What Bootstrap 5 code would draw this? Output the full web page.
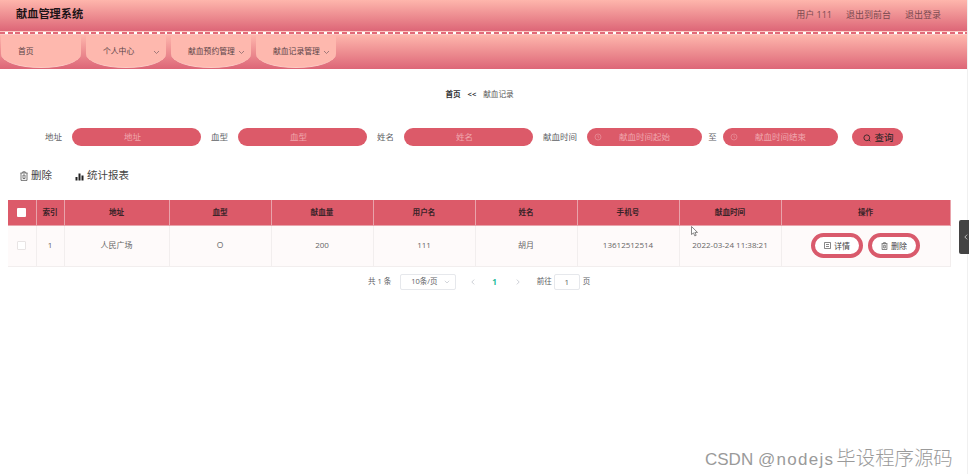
<!DOCTYPE html>
<html lang="zh-CN">
<head>
<meta charset="utf-8">
<title>献血管理系统</title>
<link href="https://cdn.jsdelivr.net/npm/bootstrap@5.3.0/dist/css/bootstrap.min.css" rel="stylesheet">
<style>
html,body{height:100%;overflow:hidden}
body{font-family:"Open Sans","Noto Sans CJK SC",sans-serif;background:#fff;color:#666;width:969px;height:474px;position:relative;font-size:8px}
.page-shell{width:968px;height:474px;border-right:1px solid #f0f0f0}
.top-head{height:31px;background:linear-gradient(180deg,#feb6ac,#dd6677);padding:0 26px 2px 16px;width:967px}
.brand-name{font-size:11.2px;font-weight:700;color:#1c1417}
.head-links{gap:14px}
.head-link{font-size:9px;color:#7b4a50}
.stitch{height:4px;background:#fbc6c0;display:flex;align-items:center;width:967px}
.stitch i{display:block;width:100%;height:2px;background:repeating-linear-gradient(90deg,#e26a78 0 5px,#fff 5px 7.6px)}
.menu-band{height:34px;background:linear-gradient(180deg,#feb6ac,#dd6677);padding-left:1px;gap:5px;width:967px}
.menu-tab{width:80px;height:33px;background:#feb8ae;border-radius:0 0 40px 40px/0 0 14px 14px;border-bottom:1px solid #fcc9c2;font-size:7.8px;color:#5a4347;padding:2px 6px 0 17px}
.tab-label{white-space:nowrap}
.menu-tab svg{margin-left:auto}
.crumbs{height:50px;padding:1px 8px 0 0;font-size:7.6px;color:#303133;gap:7px}
.crumbs b{font-weight:700}
.crumbs span{color:#555}
.filter-row{height:18px;margin-top:9px;padding-left:45px;font-size:8.5px;color:#606266}
.flabel{white-space:nowrap;width:17px;margin-right:10px}
.flabel.wide{width:34px}
.pill-field{height:18px;border-radius:9px;background:#dc5a69;color:#f0a7ae;font-size:8.5px;text-align:center;width:129px;margin-right:10px;padding-right:8px;line-height:18px;position:relative}
.pill-date{width:115px;margin-right:0;padding-right:0}
.pill-date svg{position:absolute;left:7px;top:5px}
.to-label{width:21px;text-align:center;color:#606266}
.search-pill{height:18px;width:51px;margin-left:14px;border-radius:9px;background:#dc5a69;color:#222;font-size:9.5px;gap:3px;padding:1px 0 0 2px}
.search-pill span{padding-top:2px}
.tool-row{height:18px;margin-top:21px;padding-left:20px;font-size:10.5px;color:#444;gap:23px}
.tool-item{gap:3px}
.data-wrap{margin:15px 0 0 8px;width:942px}
table.blood{table-layout:fixed;width:942px;margin:0;font-size:8px;border-collapse:collapse}
table.blood th{background:#dc5a69;color:#3a2328;height:25px;font-weight:700;padding:0;text-align:center;vertical-align:middle;border:1px solid #e9a3ab;border-width:0 1px 1px 0;font-size:7.6px}
table.blood td{background:#fefafa;color:#666;height:41px;padding:0 0 2px;text-align:center;vertical-align:middle;border:1px solid #f2eeee;border-width:0 1px 1px 0;font-size:8px}
table.blood td.type-cell{font:8.5px "Liberation Sans",sans-serif;color:#777}
.chk-head{display:inline-block;width:9px;height:9px;background:#fff;border-radius:1px;vertical-align:middle}
.chk-row{display:inline-block;width:9px;height:9px;background:#fff;border:1px solid #e8e4e4;border-radius:1px;vertical-align:middle}
.ring-btn{height:25px;width:52px;border:4px solid #d95a6c;border-radius:13px;background:#fff;color:#444;font-size:8px;gap:3px;margin:2px 2.5px 0}
.pager{height:18px;margin-top:6px;font-size:7.5px;color:#606266;padding-left:368px}
.size-box{width:56px;height:16px;border:1px solid #e6e8ec;border-radius:2px;margin:0 15px 0 9px;padding:0 5px 0 10px;color:#606266}
.page-num{color:#1dbb9a;font-weight:700;font-size:8px;margin:0 19px 0 17px}
.goto-lead{margin-left:17px}
.goto-box{width:26px;height:16px;border:1px solid #e6e8ec;border-radius:2px;text-align:center;line-height:14px;margin:0 3px 0 2px;font-size:8px}
.side-handle{position:absolute;left:959px;top:220px;width:10px;height:34px;background:#444;border-radius:2px 0 0 2px}
.side-handle svg{position:absolute;left:5px;top:14px}
.cursor-mark{position:absolute;left:691px;top:226px}
.wm{position:absolute;left:705px;top:442px;font:17px "Liberation Sans",sans-serif;color:#9a9a9a;white-space:nowrap}
.wm em{font-style:normal;letter-spacing:1.3px}
.wm span{font:19.4px "Noto Sans CJK SC",sans-serif;font-weight:300;margin-left:2px}
</style>
</head>
<body>
<div class="page-shell">
<div class="top-head d-flex align-items-center justify-content-between">
  <div class="brand-name">献血管理系统</div>
  <div class="head-links d-flex"><span class="head-link">用户 111</span><span class="head-link">退出到前台</span><span class="head-link">退出登录</span></div>
</div>
<div class="stitch"><i></i></div>
<nav class="menu-band d-flex align-items-start">
  <div class="menu-tab d-flex align-items-center"><span class="tab-label">首页</span></div>
  <div class="menu-tab d-flex align-items-center"><span class="tab-label">个人中心</span><svg width="7" height="5" viewBox="0 0 7 5"><path d="M1 1l2.5 2.5L6 1" fill="none" stroke="#8a6a6c" stroke-width=".8"/></svg></div>
  <div class="menu-tab d-flex align-items-center"><span class="tab-label">献血预约管理</span><svg width="7" height="5" viewBox="0 0 7 5"><path d="M1 1l2.5 2.5L6 1" fill="none" stroke="#8a6a6c" stroke-width=".8"/></svg></div>
  <div class="menu-tab d-flex align-items-center"><span class="tab-label">献血记录管理</span><svg width="7" height="5" viewBox="0 0 7 5"><path d="M1 1l2.5 2.5L6 1" fill="none" stroke="#8a6a6c" stroke-width=".8"/></svg></div>
</nav>
<div class="crumbs d-flex align-items-center justify-content-center"><b>首页</b><b>&lt;&lt;</b><span>献血记录</span></div>
<div class="filter-row d-flex align-items-center">
  <span class="flabel">地址</span><div class="pill-field">地址</div>
  <span class="flabel">血型</span><div class="pill-field">血型</div>
  <span class="flabel">姓名</span><div class="pill-field">姓名</div>
  <span class="flabel wide">献血时间</span>
  <div class="pill-field pill-date"><svg width="8" height="8" viewBox="0 0 8 8"><circle cx="4" cy="4" r="3" fill="none" stroke="#e88d97" stroke-width=".8"/><path d="M4 2.2V4l1.2.8" fill="none" stroke="#e88d97" stroke-width=".7"/></svg>献血时间起始</div>
  <span class="to-label">至</span>
  <div class="pill-field pill-date"><svg width="8" height="8" viewBox="0 0 8 8"><circle cx="4" cy="4" r="3" fill="none" stroke="#e88d97" stroke-width=".8"/><path d="M4 2.2V4l1.2.8" fill="none" stroke="#e88d97" stroke-width=".7"/></svg>献血时间结束</div>
  <div class="search-pill d-flex align-items-center justify-content-center"><svg width="8" height="8" viewBox="0 0 8 8"><circle cx="3.8" cy="3.8" r="2.9" fill="none" stroke="#222" stroke-width=".8"/><path d="M6 6l1.3 1.3" stroke="#222" stroke-width=".8"/></svg><span>查询</span></div>
</div>
<div class="tool-row d-flex align-items-center">
  <div class="tool-item d-flex align-items-center"><svg width="8" height="10" viewBox="0 0 8 10"><path d="M.5 2h7M2.8 2V.8h2.4V2M1 2v7.4h6V2M3 4v3.5h2V4z" fill="none" stroke="#555" stroke-width=".8"/></svg><span>删除</span></div>
  <div class="tool-item d-flex align-items-center"><svg width="9" height="9" viewBox="0 0 9 9"><path d="M.5 5h2v3.5h-2zM3.5 1.5h2v7h-2zM6.5 3.5h2v5h-2z" fill="#222"/></svg><span>统计报表</span></div>
</div>
<div class="data-wrap">
<table class="blood table">
  <colgroup><col style="width:28px"><col style="width:28px"><col style="width:105px"><col style="width:102px"><col style="width:102px"><col style="width:102px"><col style="width:102px"><col style="width:102px"><col style="width:102px"><col style="width:169px"></colgroup>
  <thead><tr><th><span class="chk-head"></span></th><th>索引</th><th>地址</th><th>血型</th><th>献血量</th><th>用户名</th><th>姓名</th><th>手机号</th><th>献血时间</th><th>操作</th></tr></thead>
  <tbody><tr><td><span class="chk-row"></span></td><td>1</td><td>人民广场</td><td class="type-cell">O</td><td>200</td><td>111</td><td>胡月</td><td>13612512514</td><td>2022-03-24 11:38:21</td>
    <td><div class="d-flex justify-content-center">
      <div class="ring-btn d-flex align-items-center justify-content-center"><svg width="7" height="7" viewBox="0 0 7 7"><path d="M.5.5h6v6h-6zM2 2.5h3M2 4.5h3" fill="none" stroke="#555" stroke-width=".7"/></svg><span>详情</span></div>
      <div class="ring-btn d-flex align-items-center justify-content-center"><svg width="7" height="8" viewBox="0 0 8 10"><path d="M.5 2h7M2.8 2V.8h2.4V2M1 2v7.4h6V2M3 4v3.5h2V4z" fill="none" stroke="#555" stroke-width=".9"/></svg><span>删除</span></div>
    </div></td></tr></tbody>
</table>
</div>
<div class="pager d-flex align-items-center">
  <span>共 1 条</span>
  <div class="size-box d-flex align-items-center justify-content-between"><span>10条/页</span><svg width="6" height="4" viewBox="0 0 6 4"><path d="M.8.8L3 3 5.2.8" fill="none" stroke="#c0c4cc" stroke-width=".7"/></svg></div>
  <svg width="4" height="6" viewBox="0 0 4 6"><path d="M3.2.6L.8 3l2.4 2.4" fill="none" stroke="#c0c4cc" stroke-width=".8"/></svg>
  <span class="page-num">1</span>
  <svg width="4" height="6" viewBox="0 0 4 6"><path d="M.8.6L3.2 3 .8 5.4" fill="none" stroke="#c0c4cc" stroke-width=".8"/></svg>
  <span class="goto-lead">前往</span><div class="goto-box">1</div><span>页</span>
</div>
</div>
<div class="side-handle"><svg width="4" height="6" viewBox="0 0 4 6"><path d="M3.2.6L.8 3l2.4 2.4" fill="none" stroke="#ddd" stroke-width=".8"/></svg></div>
<svg class="cursor-mark" width="8" height="11" viewBox="0 0 8 11"><path d="M.5.5v8l2-1.6 1.3 3 1.4-.6-1.3-2.9h2.6z" fill="#fff" stroke="#555" stroke-width=".7"/></svg>
<div class="wm">CSDN <em>@nodejs</em><span>毕设程序源码</span></div>
<script src="https://cdn.jsdelivr.net/npm/bootstrap@5.3.0/dist/js/bootstrap.bundle.min.js"></script>
</body>
</html>
